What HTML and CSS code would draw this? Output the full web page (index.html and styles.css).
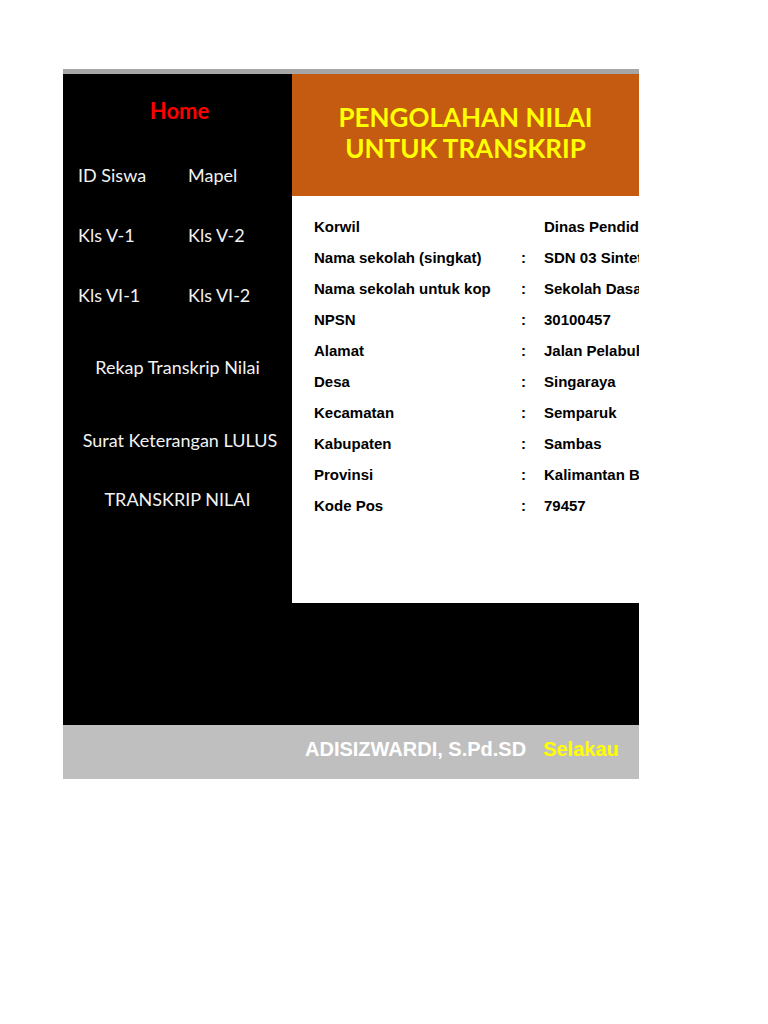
FILE: index.html
```html
<!DOCTYPE html>
<html lang="id">
<head>
<meta charset="utf-8">
<title>Pengolahan Nilai untuk Transkrip</title>
<link rel="stylesheet" href="styles.css">
</head>
<body>
<div class="sheet">
  <div class="main">
    <nav class="sidebar">
      <div class="home">Home</div>
      <div class="pair pair-first"><span>ID Siswa</span><span>Mapel</span></div>
      <div class="pair"><span>Kls V-1</span><span>Kls V-2</span></div>
      <div class="pair"><span>Kls VI-1</span><span>Kls VI-2</span></div>
      <div class="link link-rekap">Rekap Transkrip Nilai</div>
      <div class="link link-surat">Surat Keterangan LULUS</div>
      <div class="link link-transkrip">TRANSKRIP NILAI</div>
    </nav>
    <section class="content">
      <header class="banner">
        <div class="title">PENGOLAHAN NILAI<br>UNTUK TRANSKRIP</div>
      </header>
      <div class="data">
        <div class="row"><span class="label">Korwil</span><span class="colon"></span><span class="value">Dinas Pendidikan</span></div>
        <div class="row"><span class="label">Nama sekolah (singkat)</span><span class="colon">:</span><span class="value">SDN 03 Sintete</span></div>
        <div class="row"><span class="label">Nama sekolah untuk kop</span><span class="colon">:</span><span class="value">Sekolah Dasar Negeri</span></div>
        <div class="row"><span class="label">NPSN</span><span class="colon">:</span><span class="value">30100457</span></div>
        <div class="row"><span class="label">Alamat</span><span class="colon">:</span><span class="value">Jalan Pelabuhan</span></div>
        <div class="row"><span class="label">Desa</span><span class="colon">:</span><span class="value">Singaraya</span></div>
        <div class="row"><span class="label">Kecamatan</span><span class="colon">:</span><span class="value">Semparuk</span></div>
        <div class="row"><span class="label">Kabupaten</span><span class="colon">:</span><span class="value">Sambas</span></div>
        <div class="row"><span class="label">Provinsi</span><span class="colon">:</span><span class="value">Kalimantan Barat</span></div>
        <div class="row"><span class="label">Kode Pos</span><span class="colon">:</span><span class="value">79457</span></div>
      </div>
    </section>
  </div>
  <div class="band"></div>
  <footer class="footer">
    <span class="author">ADISIZWARDI, S.Pd.SD</span>
    <span class="place">Selakau</span>
  </footer>
</div>
</body>
</html>
```
FILE: styles.css
```css
html, body {
  margin: 0;
  padding: 0;
  background: #ffffff;
}

.sheet {
  width: 576px;
  margin: 69px 0 0 63px;
  border-top: 5px solid #a6a6a6;
  background: #000000;
  overflow: hidden;
}

.main {
  display: grid;
  grid-template-columns: 229px 347px;
  height: 529px;
}

.sidebar {
  background: #000000;
  color: #f2f2f2;
  font-family: Lato, "Open Sans", sans-serif;
  font-size: 18px;
  line-height: 22px;
  padding-top: 24px;
}

.home {
  color: #ff0000;
  font-weight: 700;
  font-size: 22px;
  line-height: 26px;
  text-align: center;
  padding-left: 4px;
}

.pair {
  display: grid;
  grid-template-columns: 110px auto;
  padding-left: 15px;
  margin-top: 38px;
}

.pair-first {
  margin-top: 40px;
}

.link {
  text-align: center;
}

.link-rekap {
  margin-top: 50px;
}

.link-surat {
  margin-top: 51px;
  padding-left: 5px;
}

.link-transkrip {
  margin-top: 37px;
}

.content {
  display: flex;
  flex-direction: column;
  background: #ffffff;
}

.banner {
  height: 122px;
  background: #c55a11;
  display: flex;
  align-items: center;
  justify-content: center;
}

.title {
  color: #ffff00;
  font-family: Lato, "Open Sans", sans-serif;
  font-weight: 700;
  font-size: 26px;
  line-height: 31px;
  text-align: center;
  margin-top: -4px;
}

.data {
  flex: 1;
  padding: 15px 0 0 22px;
  font-family: "Liberation Sans", Arial, sans-serif;
  font-weight: 700;
  font-size: 15px;
  color: #000000;
  overflow: hidden;
}

.row {
  display: grid;
  grid-template-columns: 207px 23px 200px;
  height: 31px;
  line-height: 31px;
  white-space: nowrap;
}

.band {
  height: 122px;
  background: #000000;
}

.footer {
  height: 48px;
  padding-bottom: 6px;
  background: #bfbfbf;
  display: flex;
  align-items: center;
  padding-left: 242px;
  gap: 17px;
  font-family: "Liberation Sans", Arial, sans-serif;
  font-weight: 700;
  font-size: 20px;
  white-space: nowrap;
}

.author {
  color: #ffffff;
}

.place {
  color: #ffff00;
}
```
